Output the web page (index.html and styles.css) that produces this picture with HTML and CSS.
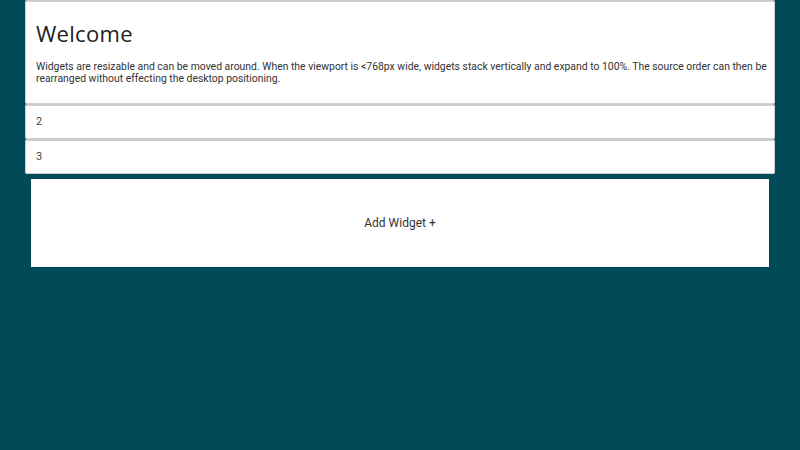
FILE: index.html
```html
<!DOCTYPE html>
<html>
<head>
<meta charset="utf-8">
<link rel="stylesheet" href="styles.css">
</head>
<body>
<div class="grid">
  <div class="widget widget-main">
    <h1 class="title">Welcome</h1>
    <p class="desc">Widgets are resizable and can be moved around. When the viewport is &lt;768px wide, widgets stack vertically and expand to 100%. The source order can then be rearranged without effecting the desktop positioning.</p>
  </div>
  <div class="widget widget-small">2</div>
  <div class="widget widget-small">3</div>
  <div class="add-wrap">
    <div class="add">Add Widget +</div>
  </div>
</div>
</body>
</html>
```
FILE: styles.css
```css
html, body {
  margin: 0;
  padding: 0;
  background: #014a57;
  height: 100%;
}
body {
  font-family: Roboto, "Liberation Sans", sans-serif;
  color: #333;
}
.grid {
  width: 750px;
  margin: 0 auto;
  display: flex;
  flex-direction: column;
}
.widget {
  background: #fff;
  border: 1px solid #cfcfcf;
  border-top: 2px solid #cccccc;
  border-radius: 2px;
  box-sizing: border-box;
  padding: 0 4px 0 10px;
}
.widget-main {
  height: 104px;
  padding-top: 18px;
}
.title {
  margin: 0;
  font-family: "Open Sans", "DejaVu Sans", sans-serif;
  font-weight: 400;
  font-size: 22px;
  line-height: 26px;
  color: #222;
  letter-spacing: 0.3px;
}
.desc {
  margin: 15px 0 0;
  font-size: 10.4px;
  line-height: 11.5px;
  color: #333;
}
.widget-small {
  height: 35px;
  display: flex;
  align-items: center;
  padding-bottom: 2px;
  font-size: 11px;
  color: #444;
}
.add-wrap {
  padding: 5px 6px 0;
}
.add {
  background: #fff;
  height: 88px;
  display: flex;
  align-items: center;
  justify-content: center;
  font-size: 12px;
  color: #333;
}
```
